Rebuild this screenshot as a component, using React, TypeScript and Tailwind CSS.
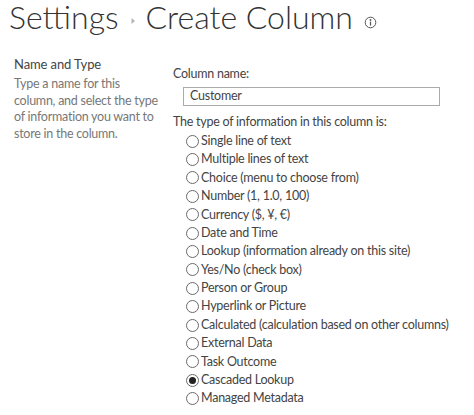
import React from "react";

const options = [
  "Single line of text",
  "Multiple lines of text",
  "Choice (menu to choose from)",
  "Number (1, 1.0, 100)",
  "Currency ($, ¥, €)",
  "Date and Time",
  "Lookup (information already on this site)",
  "Yes/No (check box)",
  "Person or Group",
  "Hyperlink or Picture",
  "Calculated (calculation based on other columns)",
  "External Data",
  "Task Outcome",
  "Cascaded Lookup",
  "Managed Metadata",
];

function Radio({ checked }: { checked: boolean }) {
  return (
    <span className="w-[13px] h-[13px] rounded-full border border-[#6a6a6a] bg-white flex items-center justify-center shrink-0">
      {checked && <span className="w-[7px] h-[7px] rounded-full bg-[#222]" />}
    </span>
  );
}

export default function App() {
  return (
    <div
      className="w-[474px] h-[415px] bg-white overflow-hidden text-[#444]"
      style={{ fontFamily: 'Lato, "Open Sans", sans-serif' }}
    >
      <div className="flex items-start pl-[9px] h-[40px]">
        <span className="text-[32px] font-light leading-[34px] text-[#333]">Settings</span>
        <svg width="6" height="8" viewBox="0 0 6 8" className="ml-[11px] mr-[10px] mt-[17px]">
          <path d="M1.5 1 L5 4 L1.5 7 Z" fill="#b5b5b5" />
        </svg>
        <span className="text-[32px] font-light leading-[34px] text-[#333]">Create Column</span>
        <svg width="13" height="13" viewBox="0 0 13 13" className="ml-[11px] mt-[16px]">
          <circle cx="6.5" cy="6.5" r="5.3" fill="none" stroke="#555" strokeWidth="1" />
          <circle cx="6.5" cy="4" r="0.9" fill="#555" />
          <rect x="5.9" y="5.6" width="1.2" height="4" fill="#555" />
        </svg>
      </div>
      <div className="flex mt-[16px]">
        <div className="w-[159px] pl-[14px] shrink-0">
          <div className="text-[13px] leading-[17px] text-[#444] tracking-[-0.1px]">Name and Type</div>
          <div className="w-[144px] text-[12.5px] leading-[16.5px] text-[#777] mt-[3px] tracking-[-0.25px]">
            Type a name for this column, and select the type of information you want to store in the column.
          </div>
        </div>
        <div className="pl-[14px] pt-[9px] text-[12.5px] text-[#444] tracking-[-0.25px]">
          <div className="leading-[17px]">Column name:</div>
          <div className="ml-[10px] mt-[5px] w-[257px] h-[19px] border border-[#ababab] flex items-center pl-[6px] leading-none">
            Customer
          </div>
          <div className="leading-[17px] mt-[7px]">The type of information in this column is:</div>
          <div className="ml-[13px] mt-[2px] flex flex-col">
            {options.map((o) => (
              <div key={o} className="flex items-center h-[18.4px] gap-[2px]">
                <Radio checked={o === "Cascaded Lookup"} />
                <span className="leading-none whitespace-nowrap">{o}</span>
              </div>
            ))}
          </div>
        </div>
      </div>
    </div>
  );
}
